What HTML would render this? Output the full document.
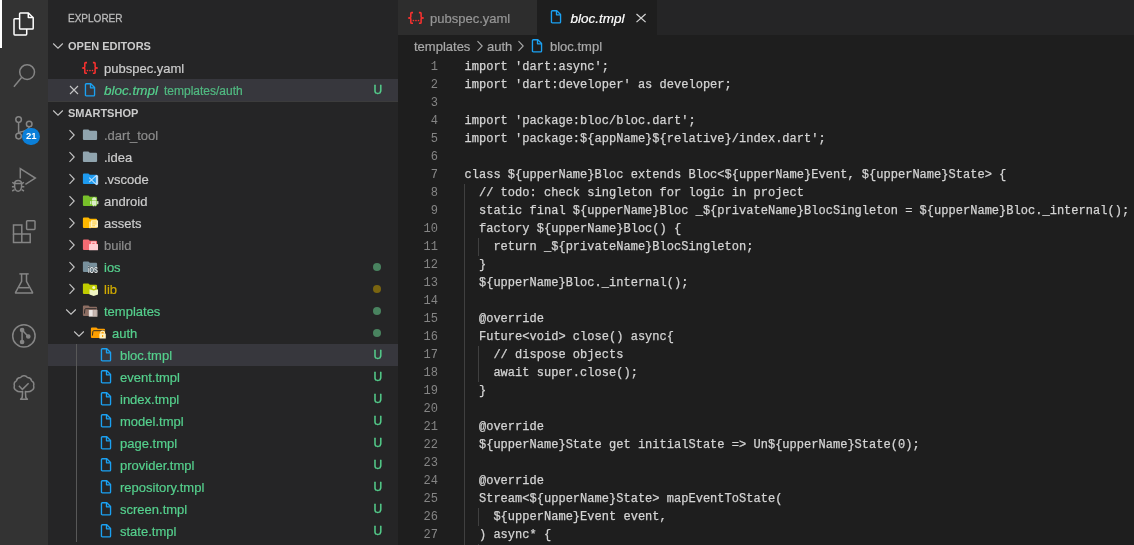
<!DOCTYPE html>
<html><head><meta charset="utf-8">
<style>
*{margin:0;padding:0;box-sizing:border-box}
html,body{width:1134px;height:545px;overflow:hidden;background:#1e1e1e;font-family:"Liberation Sans",sans-serif}
.abs{position:absolute}
#act{position:absolute;left:0;top:0;width:48px;height:545px;background:#333333}
#side{position:absolute;left:48px;top:0;width:350px;height:545px;background:#252526;overflow:hidden}
.row{position:absolute;left:0;width:350px;height:22px;line-height:22px;font-size:13px;color:#cccccc;white-space:nowrap}
.row .t{position:absolute;top:1px;-webkit-text-stroke:0.2px}
.sel{background:#37373d}
.hdr{position:absolute;left:0;width:350px;height:22px;line-height:22px;font-size:11px;font-weight:bold;color:#cccccc}
.chev{position:absolute;fill:none;stroke:#c5c5c5;stroke-width:1.1}
.g{color:#55d08d}
.U{position:absolute;left:325.6px;top:0;font-size:12px;color:#55d08d;-webkit-text-stroke:0.35px}
.dot{position:absolute;left:325px;top:7px;width:8px;height:8px;border-radius:4px;background:#49835f}
#ed{position:absolute;left:398px;top:0;width:736px;height:545px;background:#1e1e1e}
#tabs{position:absolute;left:0;top:0;width:736px;height:35px;background:#252526}
.tab{position:absolute;top:0;height:35px;line-height:37px;font-size:13px;white-space:nowrap;-webkit-text-stroke:0.2px}
#crumbs{position:absolute;left:0;top:35px;width:736px;height:22px;line-height:24px;font-size:13px;color:#a9a9a9;white-space:nowrap;-webkit-text-stroke:0.2px}
#code{position:absolute;left:0;top:58px;width:736px}
.ln{position:absolute;left:0;width:40px;text-align:right;font-family:"Liberation Mono",monospace;font-size:12px;line-height:18px;color:#858585}
.cl{position:absolute;left:66.5px;font-family:"Liberation Mono",monospace;font-size:12px;line-height:18px;color:#d4d4d4;white-space:pre;letter-spacing:0.023px;-webkit-text-stroke:0.25px #d4d4d4}
.ig{position:absolute;width:1px;background:#404040}

#act,#side,#ed{will-change:transform}

</style></head><body>
<div id="act">
<div class="abs" style="left:0;top:0;width:2px;height:48px;background:#ffffff"></div><svg class="abs" style="left:0;top:0" width="48" height="420" viewBox="0 0 48 420" fill="none" stroke="#858585" stroke-width="1.5">
<g stroke="#ffffff" stroke-linejoin="round">
<path d="M20.4 13.0 H28.4 L33.2 17.8 V28.2 Q33.2 29.0 32.4 29.0 H20.4 Q19.6 29.0 19.6 28.2 V13.8 Q19.6 13.0 20.4 13.0 Z"/>
<path d="M28.3 13.0 V17.6 H33.2"/>
<path d="M19.6 18.7 H14.8 Q14.0 18.7 14.0 19.5 V34.1 Q14.0 34.9 14.8 34.9 H25.9 Q26.7 34.9 26.7 34.1 V29.0"/>
</g>
<circle cx="27.1" cy="72.1" r="7.4"/><path d="M21.6 77.6 L13.9 86.7"/>
<circle cx="18.6" cy="119.6" r="2.8"/><circle cx="29.2" cy="124.0" r="2.8"/><circle cx="18.6" cy="136.1" r="2.8"/>
<path d="M18.6 122.4 V133.3"/><path d="M29.2 126.8 Q29.2 130.5 18.6 132.5"/>
<path d="M20.3 178.4 V168.6 L35.3 178.1 L25.4 184.4"/>
<path d="M14.6 183.4 Q14.8 180.4 18.1 180.4 Q21.4 180.4 21.6 183.4 Z"/>
<path d="M14.6 183.4 Q14.2 191.2 18.1 191.2 Q22.0 191.2 21.6 183.4"/>
<path d="M11.9 186.8 H14.4 M21.8 186.8 H24.3 M12.2 182.4 L14.6 183.6 M24.0 182.4 L21.6 183.6 M12.2 191.0 L14.6 189.6 M24.0 191.0 L21.6 189.6"/>
<path d="M13.5 225.0 H21.8 V233.9 H13.5 Z"/><path d="M13.5 233.9 V242.5 H30.2 V233.9 H21.8 V242.5"/>
<rect x="26.6" y="220.8" width="8.4" height="8.6" rx="0.8"/>
<g stroke-linejoin="round">
<path d="M19.4 273.9 H28.7"/>
<path d="M21.6 273.9 V281.3 L15.6 292.4 Q15.2 293.1 16.0 293.1 H32.1 Q32.9 293.1 32.5 292.4 L26.5 281.3 V273.9"/>
<path d="M18.9 287.7 H29.2"/>
</g>
<circle cx="23.9" cy="335.9" r="11.2"/>
<path d="M22.1 330.0 V342.0 M22.1 330.0 L28.3 336.5"/>
<circle cx="22.1" cy="330.0" r="1.6" fill="#858585"/><circle cx="22.1" cy="342.0" r="1.6" fill="#858585"/><circle cx="28.3" cy="336.5" r="1.6" fill="#858585"/>
<g stroke-linejoin="round">
<path d="M22.6 391.6 Q18.2 392.4 16.2 390.4 Q13.4 388.8 14.4 385.6 Q13.4 382.4 16.4 380.8 Q17.2 377.6 20.4 377.6 Q22.0 375.6 24.0 375.8 Q26.0 375.6 27.6 377.6 Q30.8 377.6 31.6 380.8 Q34.6 382.4 33.6 385.6 Q34.6 388.8 31.8 390.4 Q29.8 392.4 25.4 391.6 L25.8 397.4 L27.4 399.2 H20.6 L22.2 397.4 Z"/>
<path d="M18.9 385.8 L22.4 389.4 L28.6 383.2"/>
</g>
</svg><div class="abs" style="left:22.4px;top:127.6px;width:17.6px;height:17.6px;border-radius:9px;background:#0b7fd8;color:#fff;font-size:9.5px;font-weight:bold;line-height:16px;text-align:center">21</div>
</div>
<div id="side">
<div class="abs" style="left:20px;top:0;height:35px;line-height:36px;font-size:11px;color:#bbbbbb;-webkit-text-stroke:0.3px;transform:scaleX(0.91);transform-origin:0 0">EXPLORER</div><div class="hdr" style="top:35px"><svg class="chev" style="left:4px;top:7px" width="12" height="8" viewBox="0 0 12 8"><path d="M1.2 1.5 L6 6.2 L10.8 1.5"/></svg><span class="abs" style="left:20px">OPEN EDITORS</span></div><div class="row" style="top:57px"><svg class="abs" style="left:32px;top:2px" width="20" height="18" viewBox="0 0 20 18" fill="none" stroke="#f8312f" stroke-width="1.55" stroke-linejoin="round"><path d="M7 3.6 H5.6 Q4.8 3.6 4.8 4.4 V7.8 Q4.8 8.9 2.6 8.9 Q4.8 8.9 4.8 10 V13.4 Q4.8 14.2 5.6 14.2 H7"/><path d="M12.9 3.6 H14.3 Q15.1 3.6 15.1 4.4 V7.8 Q15.1 8.9 17.3 8.9 Q15.1 8.9 15.1 10 V13.4 Q15.1 14.2 14.3 14.2 H12.9"/><g fill="#f8312f" stroke="none"><circle cx="7.4" cy="11.5" r="0.85"/><circle cx="9.95" cy="11.5" r="0.85"/><circle cx="12.5" cy="11.5" r="0.85"/></g></svg><span class="t" style="left:56px">pubspec.yaml</span></div><div class="row sel" style="top:79px"><svg class="abs" style="left:21px;top:6px" width="10" height="10" viewBox="0 0 10 10" stroke="#c5c5c5" stroke-width="1.1"><path d="M1 1 L9 9 M9 1 L1 9"/></svg><svg class="abs" style="left:36px;top:4px" width="12" height="15" viewBox="0 0 12 15" fill="none" stroke="#1ba1f2" stroke-width="1.35" stroke-linejoin="round"><path d="M2.4 0.75 H6.8 L10.55 4.5 V11.9 Q10.55 12.85 9.6 12.85 H2.4 Q1.45 12.85 1.45 11.9 V1.7 Q1.45 0.75 2.4 0.75 Z"/><path d="M6.5 0.75 V4.8 H10.55"/></svg><span class="t g" style="left:56px;font-style:italic;font-size:13.5px">bloc.tmpl</span><span class="t g" style="left:116px;font-size:12px;opacity:0.85">templates/auth</span><span class="U">U</span></div><div class="abs" style="left:0;top:101px;width:350px;height:1px;background:#3c3c3c"></div><div class="hdr" style="top:102px"><svg class="chev" style="left:4px;top:7px" width="12" height="8" viewBox="0 0 12 8"><path d="M1.2 1.5 L6 6.2 L10.8 1.5"/></svg><span class="abs" style="left:20px">SMARTSHOP</span></div><div class="row" style="top:124px"><svg class="chev" style="left:20px;top:5px" width="8" height="12" viewBox="0 0 8 12"><path d="M1.5 1.2 L6.2 6 L1.5 10.8"/></svg><svg class="abs" style="left:32px;top:2px" width="20" height="18" viewBox="0 0 20 18"><path d="M2.9 4.6 Q2.9 3.5 4 3.5 H8.4 L9.8 4.8 H16 Q17.1 4.8 17.1 5.9 V13 Q17.1 14.1 16 14.1 H4 Q2.9 14.1 2.9 13 Z" fill="#90a4ae"/></svg><span class="t" style="left:56px;color:#8c8c8c">.dart_tool</span></div><div class="row" style="top:146px"><svg class="chev" style="left:20px;top:5px" width="8" height="12" viewBox="0 0 8 12"><path d="M1.5 1.2 L6.2 6 L1.5 10.8"/></svg><svg class="abs" style="left:32px;top:2px" width="20" height="18" viewBox="0 0 20 18"><path d="M2.9 4.6 Q2.9 3.5 4 3.5 H8.4 L9.8 4.8 H16 Q17.1 4.8 17.1 5.9 V13 Q17.1 14.1 16 14.1 H4 Q2.9 14.1 2.9 13 Z" fill="#90a4ae"/></svg><span class="t" style="left:56px;color:#cccccc">.idea</span></div><div class="row" style="top:168px"><svg class="chev" style="left:20px;top:5px" width="8" height="12" viewBox="0 0 8 12"><path d="M1.5 1.2 L6.2 6 L1.5 10.8"/></svg><svg class="abs" style="left:32px;top:2px" width="20" height="18" viewBox="0 0 20 18"><path d="M2.9 4.6 Q2.9 3.5 4 3.5 H8.4 L9.8 4.8 H16 Q17.1 4.8 17.1 5.9 V13 Q17.1 14.1 16 14.1 H4 Q2.9 14.1 2.9 13 Z" fill="#1e9bf0"/><path d="M9.2 7.6 L11.6 9.8 L9.2 12 M11.6 9.8 L16.4 5.4 L17.6 6 V14 L16.4 14.6 L11.6 10.2 M16.4 5.6 V14.4" stroke="#bbdefb" stroke-width="1.1" fill="none" stroke-linejoin="round"/></svg><span class="t" style="left:56px;color:#cccccc">.vscode</span></div><div class="row" style="top:190px"><svg class="chev" style="left:20px;top:5px" width="8" height="12" viewBox="0 0 8 12"><path d="M1.5 1.2 L6.2 6 L1.5 10.8"/></svg><svg class="abs" style="left:32px;top:2px" width="20" height="18" viewBox="0 0 20 18"><path d="M2.9 4.6 Q2.9 3.5 4 3.5 H8.4 L9.8 4.8 H16 Q17.1 4.8 17.1 5.9 V13 Q17.1 14.1 16 14.1 H4 Q2.9 14.1 2.9 13 Z" fill="#78c02a"/><path d="M12 7.9 Q12 5.2 14.25 5.2 Q16.5 5.2 16.5 7.9 Z" fill="#dcedc8"/><rect x="12" y="8.6" width="4.5" height="4.3" rx="0.4" fill="#dcedc8"/><rect x="10.1" y="9" width="1.3" height="3.3" rx="0.6" fill="#dcedc8"/><rect x="17.1" y="9" width="1.3" height="3.3" rx="0.6" fill="#dcedc8"/><rect x="12.8" y="12.5" width="1.1" height="1.8" fill="#dcedc8"/><rect x="14.6" y="12.5" width="1.1" height="1.8" fill="#dcedc8"/></svg><span class="t" style="left:56px;color:#cccccc">android</span></div><div class="row" style="top:212px"><svg class="chev" style="left:20px;top:5px" width="8" height="12" viewBox="0 0 8 12"><path d="M1.5 1.2 L6.2 6 L1.5 10.8"/></svg><svg class="abs" style="left:32px;top:2px" width="20" height="18" viewBox="0 0 20 18"><path d="M2.9 4.6 Q2.9 3.5 4 3.5 H8.4 L9.8 4.8 H16 Q17.1 4.8 17.1 5.9 V13 Q17.1 14.1 16 14.1 H4 Q2.9 14.1 2.9 13 Z" fill="#ffb800"/><rect x="9.4" y="7.6" width="1.2" height="6.6" fill="#fff3c4"/><rect x="11" y="6.2" width="7" height="7.4" rx="0.6" fill="#fff3c4"/><path d="M12.2 8 H16.6 M12.2 9.9 H16.6 M12.2 11.8 H15" stroke="#ffc830" stroke-width="0.9"/></svg><span class="t" style="left:56px;color:#cccccc">assets</span></div><div class="row" style="top:234px"><svg class="chev" style="left:20px;top:5px" width="8" height="12" viewBox="0 0 8 12"><path d="M1.5 1.2 L6.2 6 L1.5 10.8"/></svg><svg class="abs" style="left:32px;top:2px" width="20" height="18" viewBox="0 0 20 18"><path d="M2.9 4.6 Q2.9 3.5 4 3.5 H8.4 L9.8 4.8 H16 Q17.1 4.8 17.1 5.9 V13 Q17.1 14.1 16 14.1 H4 Q2.9 14.1 2.9 13 Z" fill="#f36b73"/><rect x="9" y="8" width="9" height="6.2" rx="0.5" fill="#ffcdd2"/><path d="M11.7 8.2 V6.1 H15.3 V8.2" stroke="#ffcdd2" stroke-width="1.2" fill="none"/></svg><span class="t" style="left:56px;color:#8c8c8c">build</span></div><div class="row" style="top:256px"><svg class="chev" style="left:20px;top:5px" width="8" height="12" viewBox="0 0 8 12"><path d="M1.5 1.2 L6.2 6 L1.5 10.8"/></svg><svg class="abs" style="left:32px;top:2px" width="20" height="18" viewBox="0 0 20 18"><path d="M2.9 4.6 Q2.9 3.5 4 3.5 H8.4 L9.8 4.8 H16 Q17.1 4.8 17.1 5.9 V13 Q17.1 14.1 16 14.1 H4 Q2.9 14.1 2.9 13 Z" fill="#78909c"/><text x="8" y="14.9" font-family="Liberation Sans" font-size="8.9" font-weight="bold" fill="#e8eef0" stroke="#252526" stroke-width="0.6" paint-order="stroke" textLength="10" lengthAdjust="spacingAndGlyphs">iOS</text></svg><span class="t" style="left:56px;color:#55d08d">ios</span><span class="dot"></span></div><div class="row" style="top:278px"><svg class="chev" style="left:20px;top:5px" width="8" height="12" viewBox="0 0 8 12"><path d="M1.5 1.2 L6.2 6 L1.5 10.8"/></svg><svg class="abs" style="left:32px;top:2px" width="20" height="18" viewBox="0 0 20 18"><path d="M2.9 4.6 Q2.9 3.5 4 3.5 H8.4 L9.8 4.8 H16 Q17.1 4.8 17.1 5.9 V13 Q17.1 14.1 16 14.1 H4 Q2.9 14.1 2.9 13 Z" fill="#c0cc00"/><circle cx="13.75" cy="7.4" r="1.5" fill="#f0f4c3"/><path d="M9.5 9.2 L13.75 10.4 L18 9.2 V14.6 L13.75 15.9 L9.5 14.6 Z" fill="#f0f4c3"/></svg><span class="t" style="left:56px;color:#d1ab00">lib</span><span class="dot" style="background:#7a6510"></span></div><div class="row" style="top:300px"><svg class="chev" style="left:17px;top:8px" width="12" height="8" viewBox="0 0 12 8"><path d="M1.2 1.5 L6 6.2 L10.8 1.5"/></svg><svg class="abs" style="left:32px;top:2px" width="20" height="18" viewBox="0 0 20 18"><path d="M2.9 4.6 Q2.9 3.5 4 3.5 H8.4 L9.8 4.8 H16 Q17.1 4.8 17.1 5.9 V13 Q17.1 14.1 16 14.1 H4 Q2.9 14.1 2.9 13 Z" fill="#8d6e63"/><path d="M16.6 6.7 H5.7 Q5 6.7 4.9 7.4 L4.4 11.6" stroke="#252526" stroke-width="0.9" fill="none"/><rect x="8.8" y="7.9" width="8.6" height="6.8" fill="#d7ccc8"/><path d="M9.3 9 H12.2 M9.3 11 H12.2 M9.3 13 H12.2" stroke="#ffffff" stroke-width="1"/><path d="M13.6 7.9 V14.7 M15.0 7.9 V14.7 M16.4 7.9 V14.7" stroke="#a1887f" stroke-width="0.5"/></svg><span class="t" style="left:56px;color:#55d08d">templates</span><span class="dot"></span></div><div class="row" style="top:322px"><svg class="chev" style="left:25px;top:8px" width="12" height="8" viewBox="0 0 12 8"><path d="M1.2 1.5 L6 6.2 L10.8 1.5"/></svg><svg class="abs" style="left:40px;top:2px" width="20" height="18" viewBox="0 0 20 18"><path d="M2.9 4.6 Q2.9 3.5 4 3.5 H8.4 L9.8 4.8 H16 Q17.1 4.8 17.1 5.9 V13 Q17.1 14.1 16 14.1 H4 Q2.9 14.1 2.9 13 Z" fill="#ffa000"/><path d="M16.6 6.7 H5.7 Q5 6.7 4.9 7.4 L4.4 11.6" stroke="#252526" stroke-width="0.9" fill="none"/><rect x="11.4" y="9.6" width="6.4" height="5" rx="0.5" fill="#fff1c0"/><path d="M12.8 9.8 V8.2 Q14.6 6 16.4 8.2 V9.8" stroke="#fff1c0" stroke-width="1.2" fill="none"/><rect x="14" y="11" width="1.2" height="2" fill="#ffa000"/></svg><span class="t g" style="left:64px">auth</span><span class="dot"></span></div><div class="row sel" style="top:344px"><svg class="abs" style="left:52px;top:4px" width="12" height="15" viewBox="0 0 12 15" fill="none" stroke="#1ba1f2" stroke-width="1.35" stroke-linejoin="round"><path d="M2.4 0.75 H6.8 L10.55 4.5 V11.9 Q10.55 12.85 9.6 12.85 H2.4 Q1.45 12.85 1.45 11.9 V1.7 Q1.45 0.75 2.4 0.75 Z"/><path d="M6.5 0.75 V4.8 H10.55"/></svg><span class="t g" style="left:72px">bloc.tmpl</span><span class="U">U</span></div><div class="row" style="top:366px"><svg class="abs" style="left:52px;top:4px" width="12" height="15" viewBox="0 0 12 15" fill="none" stroke="#1ba1f2" stroke-width="1.35" stroke-linejoin="round"><path d="M2.4 0.75 H6.8 L10.55 4.5 V11.9 Q10.55 12.85 9.6 12.85 H2.4 Q1.45 12.85 1.45 11.9 V1.7 Q1.45 0.75 2.4 0.75 Z"/><path d="M6.5 0.75 V4.8 H10.55"/></svg><span class="t g" style="left:72px">event.tmpl</span><span class="U">U</span></div><div class="row" style="top:388px"><svg class="abs" style="left:52px;top:4px" width="12" height="15" viewBox="0 0 12 15" fill="none" stroke="#1ba1f2" stroke-width="1.35" stroke-linejoin="round"><path d="M2.4 0.75 H6.8 L10.55 4.5 V11.9 Q10.55 12.85 9.6 12.85 H2.4 Q1.45 12.85 1.45 11.9 V1.7 Q1.45 0.75 2.4 0.75 Z"/><path d="M6.5 0.75 V4.8 H10.55"/></svg><span class="t g" style="left:72px">index.tmpl</span><span class="U">U</span></div><div class="row" style="top:410px"><svg class="abs" style="left:52px;top:4px" width="12" height="15" viewBox="0 0 12 15" fill="none" stroke="#1ba1f2" stroke-width="1.35" stroke-linejoin="round"><path d="M2.4 0.75 H6.8 L10.55 4.5 V11.9 Q10.55 12.85 9.6 12.85 H2.4 Q1.45 12.85 1.45 11.9 V1.7 Q1.45 0.75 2.4 0.75 Z"/><path d="M6.5 0.75 V4.8 H10.55"/></svg><span class="t g" style="left:72px">model.tmpl</span><span class="U">U</span></div><div class="row" style="top:432px"><svg class="abs" style="left:52px;top:4px" width="12" height="15" viewBox="0 0 12 15" fill="none" stroke="#1ba1f2" stroke-width="1.35" stroke-linejoin="round"><path d="M2.4 0.75 H6.8 L10.55 4.5 V11.9 Q10.55 12.85 9.6 12.85 H2.4 Q1.45 12.85 1.45 11.9 V1.7 Q1.45 0.75 2.4 0.75 Z"/><path d="M6.5 0.75 V4.8 H10.55"/></svg><span class="t g" style="left:72px">page.tmpl</span><span class="U">U</span></div><div class="row" style="top:454px"><svg class="abs" style="left:52px;top:4px" width="12" height="15" viewBox="0 0 12 15" fill="none" stroke="#1ba1f2" stroke-width="1.35" stroke-linejoin="round"><path d="M2.4 0.75 H6.8 L10.55 4.5 V11.9 Q10.55 12.85 9.6 12.85 H2.4 Q1.45 12.85 1.45 11.9 V1.7 Q1.45 0.75 2.4 0.75 Z"/><path d="M6.5 0.75 V4.8 H10.55"/></svg><span class="t g" style="left:72px">provider.tmpl</span><span class="U">U</span></div><div class="row" style="top:476px"><svg class="abs" style="left:52px;top:4px" width="12" height="15" viewBox="0 0 12 15" fill="none" stroke="#1ba1f2" stroke-width="1.35" stroke-linejoin="round"><path d="M2.4 0.75 H6.8 L10.55 4.5 V11.9 Q10.55 12.85 9.6 12.85 H2.4 Q1.45 12.85 1.45 11.9 V1.7 Q1.45 0.75 2.4 0.75 Z"/><path d="M6.5 0.75 V4.8 H10.55"/></svg><span class="t g" style="left:72px">repository.tmpl</span><span class="U">U</span></div><div class="row" style="top:498px"><svg class="abs" style="left:52px;top:4px" width="12" height="15" viewBox="0 0 12 15" fill="none" stroke="#1ba1f2" stroke-width="1.35" stroke-linejoin="round"><path d="M2.4 0.75 H6.8 L10.55 4.5 V11.9 Q10.55 12.85 9.6 12.85 H2.4 Q1.45 12.85 1.45 11.9 V1.7 Q1.45 0.75 2.4 0.75 Z"/><path d="M6.5 0.75 V4.8 H10.55"/></svg><span class="t g" style="left:72px">screen.tmpl</span><span class="U">U</span></div><div class="row" style="top:520px"><svg class="abs" style="left:52px;top:4px" width="12" height="15" viewBox="0 0 12 15" fill="none" stroke="#1ba1f2" stroke-width="1.35" stroke-linejoin="round"><path d="M2.4 0.75 H6.8 L10.55 4.5 V11.9 Q10.55 12.85 9.6 12.85 H2.4 Q1.45 12.85 1.45 11.9 V1.7 Q1.45 0.75 2.4 0.75 Z"/><path d="M6.5 0.75 V4.8 H10.55"/></svg><span class="t g" style="left:72px">state.tmpl</span><span class="U">U</span></div><div class="abs" style="left:28px;top:344px;width:1px;height:198px;background:#585858"></div>
</div>
<div id="ed">
<div id="tabs"><div class="tab" style="left:0;width:139px;background:#2d2d2d;color:#969696"><svg class="abs" style="left:8px;top:8.5px" width="20" height="18" viewBox="0 0 20 18" fill="none" stroke="#f8312f" stroke-width="1.55" stroke-linejoin="round"><path d="M7 3.6 H5.6 Q4.8 3.6 4.8 4.4 V7.8 Q4.8 8.9 2.6 8.9 Q4.8 8.9 4.8 10 V13.4 Q4.8 14.2 5.6 14.2 H7"/><path d="M12.9 3.6 H14.3 Q15.1 3.6 15.1 4.4 V7.8 Q15.1 8.9 17.3 8.9 Q15.1 8.9 15.1 10 V13.4 Q15.1 14.2 14.3 14.2 H12.9"/><g fill="#f8312f" stroke="none"><circle cx="7.4" cy="11.5" r="0.85"/><circle cx="9.95" cy="11.5" r="0.85"/><circle cx="12.5" cy="11.5" r="0.85"/></g></svg><span class="abs" style="left:32px;top:0">pubspec.yaml</span></div><div class="tab" style="left:139px;width:120px;background:#1e1e1e;color:#ffffff"><svg class="abs" style="left:12.5px;top:9.5px" width="12" height="15" viewBox="0 0 12 15" fill="none" stroke="#1ba1f2" stroke-width="1.35" stroke-linejoin="round"><path d="M2.4 0.75 H6.8 L10.55 4.5 V11.9 Q10.55 12.85 9.6 12.85 H2.4 Q1.45 12.85 1.45 11.9 V1.7 Q1.45 0.75 2.4 0.75 Z"/><path d="M6.5 0.75 V4.8 H10.55"/></svg><span class="abs" style="left:33.5px;top:0;font-style:italic;font-size:13.5px">bloc.tmpl</span><svg class="abs" style="left:97.8px;top:13px" width="12" height="11" viewBox="0 0 12 11" stroke="#d4d4d4" stroke-width="1.25"><path d="M1.5 1 L10.6 9.1 M10.6 1 L1.5 9.1"/></svg></div></div><div id="crumbs"><span class="abs" style="left:16px">templates</span><svg class="chev" style="left:78px;top:5px;stroke:#a9a9a9" width="8" height="12" viewBox="0 0 8 12"><path d="M1.5 1.2 L6.2 6 L1.5 10.8"/></svg><span class="abs" style="left:89px">auth</span><svg class="chev" style="left:119px;top:5px;stroke:#a9a9a9" width="8" height="12" viewBox="0 0 8 12"><path d="M1.5 1.2 L6.2 6 L1.5 10.8"/></svg><svg class="abs" style="left:132.5px;top:4px" width="12" height="15" viewBox="0 0 12 15" fill="none" stroke="#1ba1f2" stroke-width="1.35" stroke-linejoin="round"><path d="M2.4 0.75 H6.8 L10.55 4.5 V11.9 Q10.55 12.85 9.6 12.85 H2.4 Q1.45 12.85 1.45 11.9 V1.7 Q1.45 0.75 2.4 0.75 Z"/><path d="M6.5 0.75 V4.8 H10.55"/></svg><span class="abs" style="left:152px">bloc.tmpl</span></div><div id="code"><div class="ln" style="top:0px">1</div><div class="cl" style="top:0px">import 'dart:async';</div><div class="ln" style="top:18px">2</div><div class="cl" style="top:18px">import 'dart:developer' as developer;</div><div class="ln" style="top:36px">3</div><div class="cl" style="top:36px"></div><div class="ln" style="top:54px">4</div><div class="cl" style="top:54px">import 'package:bloc/bloc.dart';</div><div class="ln" style="top:72px">5</div><div class="cl" style="top:72px">import 'package:${appName}${relative}/index.dart';</div><div class="ln" style="top:90px">6</div><div class="cl" style="top:90px"></div><div class="ln" style="top:108px">7</div><div class="cl" style="top:108px">class ${upperName}Bloc extends Bloc&lt;${upperName}Event, ${upperName}State&gt; {</div><div class="ln" style="top:126px">8</div><div class="cl" style="top:126px">  // todo: check singleton for logic in project</div><div class="ln" style="top:144px">9</div><div class="cl" style="top:144px">  static final ${upperName}Bloc _${privateName}BlocSingleton = ${upperName}Bloc._internal();</div><div class="ln" style="top:162px">10</div><div class="cl" style="top:162px">  factory ${upperName}Bloc() {</div><div class="ln" style="top:180px">11</div><div class="cl" style="top:180px">    return _${privateName}BlocSingleton;</div><div class="ln" style="top:198px">12</div><div class="cl" style="top:198px">  }</div><div class="ln" style="top:216px">13</div><div class="cl" style="top:216px">  ${upperName}Bloc._internal();</div><div class="ln" style="top:234px">14</div><div class="cl" style="top:234px"></div><div class="ln" style="top:252px">15</div><div class="cl" style="top:252px">  @override</div><div class="ln" style="top:270px">16</div><div class="cl" style="top:270px">  Future&lt;void&gt; close() async{</div><div class="ln" style="top:288px">17</div><div class="cl" style="top:288px">    // dispose objects</div><div class="ln" style="top:306px">18</div><div class="cl" style="top:306px">    await super.close();</div><div class="ln" style="top:324px">19</div><div class="cl" style="top:324px">  }</div><div class="ln" style="top:342px">20</div><div class="cl" style="top:342px"></div><div class="ln" style="top:360px">21</div><div class="cl" style="top:360px">  @override</div><div class="ln" style="top:378px">22</div><div class="cl" style="top:378px">  ${upperName}State get initialState =&gt; Un${upperName}State(0);</div><div class="ln" style="top:396px">23</div><div class="cl" style="top:396px"></div><div class="ln" style="top:414px">24</div><div class="cl" style="top:414px">  @override</div><div class="ln" style="top:432px">25</div><div class="cl" style="top:432px">  Stream&lt;${upperName}State&gt; mapEventToState(</div><div class="ln" style="top:450px">26</div><div class="cl" style="top:450px">    ${upperName}Event event,</div><div class="ln" style="top:468px">27</div><div class="cl" style="top:468px">  ) async* {</div><div class="ln" style="top:486px">28</div><div class="cl" style="top:486px">    try {</div><div class="ig" style="left:66px;top:126px;height:378px"></div><div class="ig" style="left:80px;top:180px;height:18px"></div><div class="ig" style="left:80px;top:288px;height:36px"></div><div class="ig" style="left:80px;top:450px;height:18px"></div><div class="ig" style="left:80px;top:486px;height:18px"></div></div>
</div>
</body></html>
